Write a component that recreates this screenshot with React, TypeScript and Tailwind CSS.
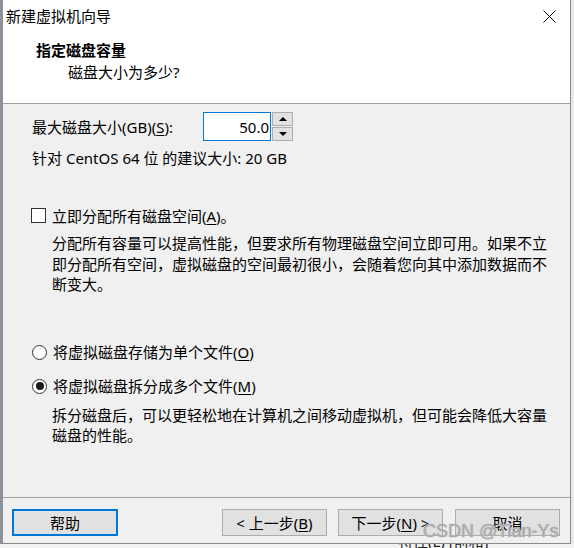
import React from "react";

function Up() {
  return (
    <svg width="8" height="4" viewBox="0 0 8 4">
      <path d="M4 0L8 4H0z" fill="#000" />
    </svg>
  );
}
function Down() {
  return (
    <svg width="8" height="4" viewBox="0 0 8 4">
      <path d="M0 0H8L4 4z" fill="#000" />
    </svg>
  );
}

export default function App() {
  return (
    <div className="relative w-[574px] h-[548px] bg-[#e9e9e9] overflow-hidden font-['Noto_Sans','Noto_Sans_CJK_SC',sans-serif] text-[15px] text-black">
      <div className="flex">
        <div className="w-[571px] h-[544px] flex flex-col border-l-[3px] border-l-[#8b9299] border-r border-r-[#8a8a8a] border-b border-b-[#8a8a8a] bg-[#f0f0f0]">
          {/* header (white) */}
          <div className="bg-white border-b border-b-[#a0a0a0] h-[104px] flex flex-col">
            <div className="h-[32px] flex items-center justify-between pl-[3px] pr-[14px]">
              <span className="leading-[20px]">新建虚拟机向导</span>
              <svg width="13" height="13" viewBox="0 0 13 13">
                <path d="M0.5 0.5L12.5 12.5M12.5 0.5L0.5 12.5" stroke="#000" strokeWidth="1" />
              </svg>
            </div>
            <div className="pl-[33px] pt-[8px] leading-[20px]">
              <div className="font-bold">指定磁盘容量</div>
              <div className="pl-[32px] mt-[2px]">磁盘大小为多少?</div>
            </div>
          </div>

          {/* body */}
          <div className="h-[394px] border-b border-b-[#a0a0a0] flex flex-col">
            <div className="flex items-center h-[29px] mt-[8px] ml-[29px]">
              <span className="w-[171px] leading-[20px]">
                最大磁盘大小(GB)(<span className="underline underline-offset-2">S</span>):
              </span>
              <div className="w-[68px] h-[29px] border border-[#0078d7] bg-white flex items-center justify-end pr-[1px] leading-[20px]">
                50.0
              </div>
              <div className="ml-[1px] w-[21px] flex flex-col gap-[1px]">
                <div className="h-[14px] border border-[#adadad] bg-[#e1e1e1] flex items-center justify-center">
                  <Up />
                </div>
                <div className="h-[14px] border border-[#adadad] bg-[#e1e1e1] flex items-center justify-center">
                  <Down />
                </div>
              </div>
            </div>

            <div className="mt-[7px] ml-[29px] leading-[20px] whitespace-nowrap">
              针对 CentOS 64 位 的建议大小: 20 GB
            </div>

            <div className="mt-[37px] h-[21px] flex items-center ml-[28px]">
              <div className="w-[15px] h-[15px] border border-[#333] bg-white" />
              <span className="ml-[6px] leading-[20px]">
                立即分配所有磁盘空间(<span className="underline underline-offset-2">A</span>)。
              </span>
            </div>

            <div className="mt-[7px] ml-[49px] leading-[20.5px] whitespace-nowrap">
              <div>分配所有容量可以提高性能，但要求所有物理磁盘空间立即可用。如果不立</div>
              <div>即分配所有空间，虚拟磁盘的空间最初很小，会随着您向其中添加数据而不</div>
              <div>断变大。</div>
            </div>

            <div className="mt-[47px] h-[21px] flex items-center ml-[29px]">
              <div className="w-[15px] h-[15px] rounded-full border border-[#333] bg-white" />
              <span className="ml-[6px] leading-[20px]">
                将虚拟磁盘存储为单个文件(<span className="underline underline-offset-2">O</span>)
              </span>
            </div>

            <div className="mt-[13px] h-[21px] flex items-center ml-[29px]">
              <div className="w-[15px] h-[15px] rounded-full border border-[#333] bg-white flex items-center justify-center">
                <div className="w-[8px] h-[8px] rounded-full bg-[#1a1a1a]" />
              </div>
              <span className="ml-[6px] leading-[20px]">
                将虚拟磁盘拆分成多个文件(<span className="underline underline-offset-2">M</span>)
              </span>
            </div>

            <div className="mt-[8px] ml-[49px] leading-[20px] whitespace-nowrap">
              <div>拆分磁盘后，可以更轻松地在计算机之间移动虚拟机，但可能会降低大容量</div>
              <div>磁盘的性能。</div>
            </div>
          </div>

          {/* footer */}
          <div className="h-[45px] flex items-start pt-[11px]">
            <button className="ml-[9px] w-[106px] h-[27px] border-2 border-[#0078d7] bg-[#e1e1e1] flex items-center justify-center leading-[20px]">
              帮助
            </button>
            <button className="ml-[104px] w-[105px] h-[27px] border border-[#adadad] bg-[#e1e1e1] flex items-center justify-center leading-[20px]">
              &lt; 上一步(<span className="underline underline-offset-2">B</span>)
            </button>
            <button className="ml-[11px] w-[105px] h-[27px] border border-[#adadad] bg-[#e1e1e1] flex items-center justify-center leading-[20px]">
              下一步(<span className="underline underline-offset-2">N</span>) &gt;
            </button>
            <button className="ml-[12px] w-[105px] h-[27px] border border-[#adadad] bg-[#e1e1e1] flex items-center justify-center leading-[20px]">
              取消
            </button>
          </div>
        </div>
      </div>

      {/* background window peeking below */}
      <div className="h-[4px] overflow-hidden bg-[#f2f2f2]">
        <div className="ml-[398px] -mt-[13px] leading-[20px] text-[#222]">特性(L) [前和]</div>
      </div>

      {/* watermark */}
      <div className="absolute left-[423px] top-[519px] text-[18px] leading-[24px] font-['Liberation_Sans',sans-serif] text-[#a8a8a8] [text-shadow:0_0_1px_#ffffff,0_0_1px_#555555] whitespace-nowrap">
        CSDN @Tian-Ys
      </div>
    </div>
  );
}
